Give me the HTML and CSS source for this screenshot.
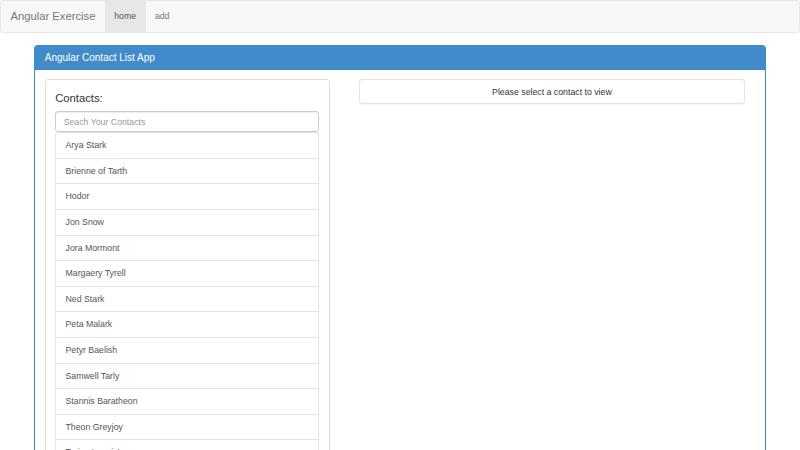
FILE: index.html
```html
<!DOCTYPE html>
<html>
<head>
<meta charset="utf-8">
<title>Angular Exercise</title>
<link rel="stylesheet" href="styles.css">
</head>
<body>
<nav class="navbar">
  <a class="brand" href="#">Angular Exercise</a>
  <ul class="nav">
    <li class="active"><a href="#">home</a></li>
    <li><a href="#">add</a></li>
  </ul>
</nav>
<div class="container">
  <div class="panel panel-primary">
    <div class="panel-heading"><h3 class="panel-title">Angular Contact List App</h3></div>
    <div class="panel-body">
      <div class="row">
        <div class="col-left">
          <div class="card">
            <h4 class="card-title">Contacts:</h4>
            <input class="form-control" type="text" placeholder="Seach Your Contacts">
            <ul class="list-group">
              <li class="list-group-item">Arya Stark</li>
              <li class="list-group-item">Brienne of Tarth</li>
              <li class="list-group-item">Hodor</li>
              <li class="list-group-item">Jon Snow</li>
              <li class="list-group-item">Jora Mormont</li>
              <li class="list-group-item">Margaery Tyrell</li>
              <li class="list-group-item">Ned Stark</li>
              <li class="list-group-item">Peta Malark</li>
              <li class="list-group-item">Petyr Baelish</li>
              <li class="list-group-item">Samwell Tarly</li>
              <li class="list-group-item">Stannis Baratheon</li>
              <li class="list-group-item">Theon Greyjoy</li>
              <li class="list-group-item">Tyrion Lannister</li>
              <li class="list-group-item">Ygritte</li>
            </ul>
          </div>
        </div>
        <div class="col-right">
          <div class="detail-wrap">
            <div class="detail-box">Please select a contact to view</div>
          </div>
        </div>
      </div>
    </div>
  </div>
</div>
</body>
</html>
```
FILE: styles.css
```css
* {
  box-sizing: border-box;
}
html,
body {
  overflow-x: hidden;
}
body {
  margin: 0;
  font-family: "Liberation Sans", Arial, Helvetica, sans-serif;
  font-size: 8.75px;
  line-height: 12.5px;
  color: #333;
  background: #fff;
}
a {
  text-decoration: none;
}
.navbar {
  display: flex;
  margin-bottom: 12.5px;
  background: #f8f8f8;
  border: 1px solid #e7e7e7;
  border-radius: 3px;
}
.brand {
  display: block;
  padding: 9px 9.4px;
  font-size: 11.25px;
  line-height: 12.5px;
  color: #777;
}
.nav {
  display: flex;
  margin: 0;
  padding: 0;
  list-style: none;
}
.nav a {
  display: block;
  padding: 9px 9.4px;
  line-height: 12.5px;
  color: #777;
}
.nav .active a {
  background: #e7e7e7;
  color: #555;
}
.container {
  width: 731.25px;
  margin: 0 auto;
}
.panel {
  background: #fff;
  border: 1px solid #ddd;
  border-radius: 3px;
}
.panel-primary {
  border-color: #428bca;
}
.panel-heading {
  padding: 6px 9.4px;
  background: #428bca;
  border-bottom: 1px solid #428bca;
  border-radius: 2px 2px 0 0;
  color: #fff;
}
.panel-title {
  margin: 0;
  font-size: 10px;
  font-weight: normal;
  line-height: 11px;
}
.panel-body {
  padding: 9.375px;
}
.row {
  display: flex;
  margin: 0 -9.375px;
}
.col-left {
  width: 41.6667%;
  padding: 0 9.375px;
}
.col-right {
  width: 58.3333%;
  padding: 0 9.375px;
}
.card {
  padding: 9.375px;
  border: 1px solid #ddd;
  border-radius: 3px;
  box-shadow: 0 1px 1px rgba(0, 0, 0, 0.04);
}
.card-title {
  margin: 2.5px 0 6.25px;
  font-size: 11.25px;
  font-weight: 500;
  line-height: 12.4px;
}
.form-control {
  display: block;
  width: 100%;
  height: 21.25px;
  padding: 3.75px 7.5px;
  font-family: inherit;
  font-size: 8.75px;
  line-height: 12.5px;
  color: #555;
  background: #fff;
  border: 1px solid #ccc;
  border-radius: 3px;
  box-shadow: inset 0 1px 1px rgba(0, 0, 0, 0.075);
}
.form-control::placeholder {
  color: #999;
}
.list-group {
  margin: 0;
  padding: 0;
  list-style: none;
}
.list-group-item {
  padding: 6px 9.4px;
  margin-bottom: -1px;
  line-height: 12.6px;
  color: #555;
  background: #fff;
  border: 1px solid #e3e3e3;
}
.list-group-item:first-child {
  border-top-left-radius: 3px;
  border-top-right-radius: 3px;
}
.detail-wrap {
  padding: 0 10px;
}
.detail-box {
  padding: 5.25px 9.4px;
  text-align: center;
  border: 1px solid #e3e3e3;
  border-radius: 3px;
  box-shadow: 0 1px 1px rgba(0, 0, 0, 0.04);
}
```
